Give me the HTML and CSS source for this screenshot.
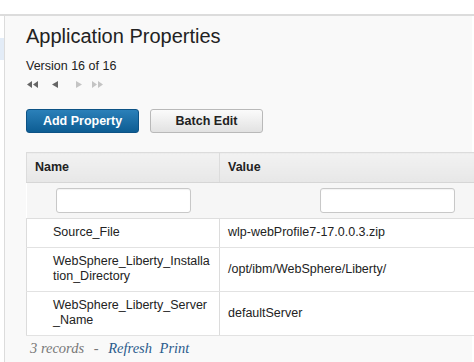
FILE: index.html
```html
<!DOCTYPE html>
<html lang="en">
<head>
    <meta charset="utf-8" />
    <title>Application Properties</title>
    <link rel="stylesheet" href="styles.css">
</head>
<body>
    <div class="topbar"></div>

    <div class="main">
        <div class="sidebar">
            <div class="sidebar-item"></div>
        </div>

        <div class="panel">
            <h1 class="title">Application Properties</h1>
            <div class="version">Version 16 of 16</div>

            <div class="pager">
                <svg class="pg first" width="11" height="7" viewBox="0 0 11 7"><path d="M5 0v7L0 3.5zM11 0v7L6 3.5z" /></svg>
                <svg class="pg prev" width="6" height="7" viewBox="0 0 6 7"><path d="M6 0v7L0 3.5z" /></svg>
                <svg class="pg next off" width="6" height="7" viewBox="0 0 6 7"><path d="M0 0v7l6-3.5z" /></svg>
                <svg class="pg last off" width="11" height="7" viewBox="0 0 11 7"><path d="M0 0v7l5-3.5zM6 0v7l5-3.5z" /></svg>
            </div>

            <div class="actions">
                <button class="btn btn-primary">Add Property</button>
                <button class="btn">Batch Edit</button>
            </div>

            <table class="props">
                <colgroup>
                    <col class="col-name">
                    <col class="col-value">
                </colgroup>
                <thead>
                    <tr class="head">
                        <th>Name</th>
                        <th>Value</th>
                    </tr>
                    <tr class="filter">
                        <td><input type="text"></td>
                        <td><input type="text"></td>
                    </tr>
                </thead>
                <tbody>
                    <tr>
                        <td class="name">Source_File</td>
                        <td>wlp-webProfile7-17.0.0.3.zip</td>
                    </tr>
                    <tr>
                        <td class="name">WebSphere_Liberty_Installation_Directory</td>
                        <td>/opt/ibm/WebSphere/Liberty/</td>
                    </tr>
                    <tr>
                        <td class="name">WebSphere_Liberty_Server_Name</td>
                        <td>defaultServer</td>
                    </tr>
                </tbody>
            </table>

            <div class="records">
                3 records <span class="sep">-</span>
                <a href="#">Refresh</a>
                <a href="#">Print</a>
            </div>
        </div>
    </div>
</body>
</html>
```
FILE: styles.css
```css
* {
    padding: 0;
    margin: 0;
    box-sizing: border-box;
}

html, body {
    height: 100%;
}

body {
    background: #fff;
    font-family: "Liberation Sans", Arial, sans-serif;
    font-size: 12.5px;
    color: #222;
    overflow: hidden;
}

.topbar {
    height: 16px;
    border-bottom: 2px solid #dcdcdc;
}

.main {
    display: flex;
    height: 346px;
}

.sidebar {
    width: 4px;
    flex: none;
}

.sidebar-item {
    margin-top: 22px;
    height: 22px;
    background: #e3ecf7;
}

.panel {
    width: 468px;
    flex: none;
    background: #f9f9f9;
    border-left: 1px solid #dcdcdc;
    padding: 8px 0 0 21px;
}

.title {
    font-size: 20px;
    font-weight: normal;
    line-height: 24px;
    color: #222;
}

.version {
    margin-top: 10px;
    font-size: 12.5px;
    line-height: 16px;
}

.pager {
    margin-top: 5px;
    height: 10px;
    display: flex;
    align-items: center;
}

.pg {
    display: block;
    fill: #666;
}

.pg.off {
    fill: #c4c4c4;
}

.first {
    margin-left: 1px;
}

.prev {
    margin-left: 14px;
}

.next {
    margin-left: 18px;
}

.last {
    margin-left: 10px;
}

.actions {
    margin-top: 20px;
    display: flex;
    gap: 11px;
}

.btn {
    width: 113px;
    height: 24px;
    font-family: "Liberation Sans", Arial, sans-serif;
    font-size: 12.5px;
    font-weight: bold;
    color: #222;
    border: 1px solid #b9b9b9;
    border-radius: 3px;
    background: linear-gradient(#fbfbfb, #e2e2e2);
}

.btn-primary {
    color: #fff;
    border-color: #0c5285;
    background: linear-gradient(#2b80b9, #0d5d93);
}

.props {
    margin-top: 19px;
    width: 528px;
    table-layout: fixed;
    border-collapse: collapse;
    background: #fff;
    border: 1px solid #dcdcdc;
    line-height: 15px;
}

.col-name {
    width: 193px;
}

.col-value {
    width: 335px;
}

.props th,
.props td {
    border-left: 1px solid #dcdcdc;
    border-bottom: 1px solid #e2e2e2;
    padding: 6px 8px 7px;
    text-align: left;
    vertical-align: middle;
}

.props .head th {
    height: 30px;
    padding: 6px 8px;
    font-weight: bold;
    background: linear-gradient(#f2f2f2, #e7e7e7);
    border-bottom-color: #d6d6d6;
}

.props .filter td {
    height: 36px;
    padding: 5px 0;
    text-align: center;
    background: #f6f6f6;
    border-left-color: transparent;
    border-bottom-color: #dedede;
}

.props .filter input {
    width: 135px;
    height: 25px;
    border: 1px solid #c8c8c8;
    border-radius: 3px;
    background: #fff;
    box-shadow: inset 0 1px 1px rgba(0, 0, 0, 0.05);
}

.props td.name {
    padding-left: 26px;
    word-break: break-all;
}

.records {
    margin-top: 3px;
    padding-left: 4px;
    font-family: "Liberation Serif", Georgia, serif;
    font-style: italic;
    font-size: 14.5px;
    line-height: 18px;
    color: #777;
}

.records .sep {
    margin: 0 6px;
}

.records a {
    color: #2a5b8c;
    text-decoration: none;
    margin-right: 4px;
}
```
